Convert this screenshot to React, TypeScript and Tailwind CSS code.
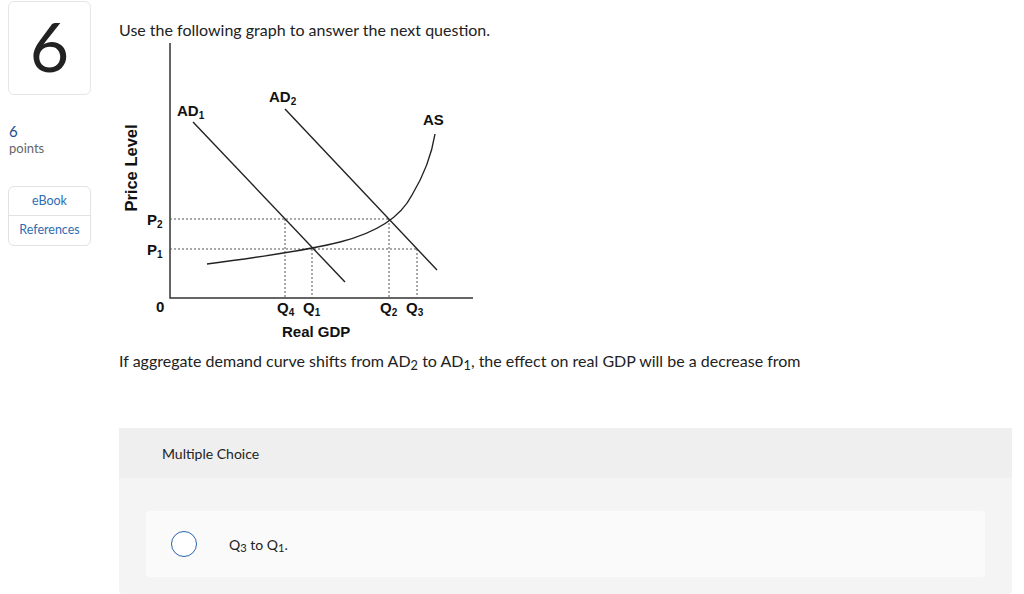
import React from "react";

const FONT = { fontFamily: "Lato, 'Open Sans', 'Liberation Sans', sans-serif" };
const GRAPH_FONT = "'Liberation Sans', Arial, sans-serif";

function Sub({ children }: { children: React.ReactNode }) {
  return <sub className="text-[0.8em] relative top-[0.2em] align-baseline">{children}</sub>;
}

// points are page coords minus (119, 40)
const ox = 119;
const oy = 40;
const p = (x: number, y: number) => `${x - ox},${y - oy}`;

function Graph() {
  const dash = { stroke: "#555", strokeWidth: 1, strokeDasharray: "2 2" };
  const label = { fontFamily: GRAPH_FONT, fontWeight: 700, fontSize: 15, fill: "#111" };
  return (
    <svg width={380} height={305} viewBox="0 0 380 305" className="block">
      {/* axes */}
      <polyline points={`${p(170, 43)} ${p(170, 298)} ${p(473, 298)}`} fill="none" stroke="#333" strokeWidth={1.5} />
      {/* guide lines */}
      <line x1={170 - ox} y1={219 - oy} x2={389 - ox} y2={219 - oy} {...dash} />
      <line x1={170 - ox} y1={249 - oy} x2={417 - ox} y2={249 - oy} {...dash} />
      <line x1={285 - ox} y1={219 - oy} x2={285 - ox} y2={298 - oy} {...dash} />
      <line x1={312 - ox} y1={249 - oy} x2={312 - ox} y2={298 - oy} {...dash} />
      <line x1={389 - ox} y1={219 - oy} x2={389 - ox} y2={298 - oy} {...dash} />
      <line x1={417 - ox} y1={249 - oy} x2={417 - ox} y2={298 - oy} {...dash} />
      {/* AD curves */}
      <line x1={193 - ox} y1={122 - oy} x2={345 - ox} y2={282 - oy} stroke="#222" strokeWidth={1.4} />
      <line x1={285 - ox} y1={109 - oy} x2={437 - ox} y2={270 - oy} stroke="#222" strokeWidth={1.4} />
      {/* AS curve */}
      <path
        d={`M ${p(207, 264)} Q ${p(300, 252)} ${p(340, 242)} Q ${p(395, 228)} ${p(412, 195)} Q ${p(430, 165)} ${p(435, 134)}`}
        fill="none"
        stroke="#222"
        strokeWidth={1.4}
      />
      {/* labels */}
      <text x={177 - ox} y={116 - oy} {...label}>
        AD<tspan fontSize={10} dy={3}>1</tspan>
      </text>
      <text x={269 - ox} y={102 - oy} {...label}>
        AD<tspan fontSize={10} dy={3}>2</tspan>
      </text>
      <text x={423 - ox} y={125 - oy} {...label}>AS</text>
      <text
        {...label}
        fontSize={16.5}
        textAnchor="middle"
        transform={`translate(${137 - ox},${168 - oy}) rotate(-90)`}
      >
        Price Level
      </text>
      <text x={147 - ox} y={225 - oy} {...label}>
        P<tspan fontSize={10} dy={3}>2</tspan>
      </text>
      <text x={147 - ox} y={255 - oy} {...label}>
        P<tspan fontSize={10} dy={3}>1</tspan>
      </text>
      <text x={156 - ox} y={312 - oy} {...label}>0</text>
      <text x={277 - ox} y={313 - oy} {...label}>
        Q<tspan fontSize={10} dy={3}>4</tspan>
      </text>
      <text x={303 - ox} y={313 - oy} {...label}>
        Q<tspan fontSize={10} dy={3}>1</tspan>
      </text>
      <text x={380 - ox} y={313 - oy} {...label}>
        Q<tspan fontSize={10} dy={3}>2</tspan>
      </text>
      <text x={406 - ox} y={313 - oy} {...label}>
        Q<tspan fontSize={10} dy={3}>3</tspan>
      </text>
      <text x={282 - ox} y={337 - oy} {...label}>Real GDP</text>
    </svg>
  );
}

export default function App() {
  return (
    <div className="w-[1024px] h-[594px] overflow-hidden bg-white flex text-[#222]" style={FONT}>
      {/* left rail */}
      <div className="w-[91px] pl-2 pt-px shrink-0 flex flex-col">
        <div className="h-[94px] w-[83px] rounded-md border border-[#e6e6e6] flex items-center justify-center">
          <span className="text-[68px] font-normal leading-none text-[#222] -mt-1">6</span>
        </div>
        <div className="mt-[27px] pl-px">
          <div className="text-[15px] leading-[18px] text-[#1b4f8a]">6</div>
          <div className="text-[13px] leading-[16px] text-[#666]">points</div>
        </div>
        <div className="mt-[30px] w-[83px] rounded-md border border-[#e2e2e2] flex flex-col text-[12.5px] text-[#2f6cb3]">
          <div className="h-[29px] flex items-center justify-center border-b border-[#e2e2e2]">eBook</div>
          <div className="h-[29px] flex items-center justify-center">References</div>
        </div>
      </div>

      {/* main */}
      <div className="ml-[28px] mr-3 flex-1 flex flex-col">
        <p className="mt-[20px] text-[16px] leading-[20px]">Use the following graph to answer the next question.</p>
        <Graph />
        <p className="mt-[6px] text-[16px] leading-[20px]">
          If aggregate demand curve shifts from AD<Sub>2</Sub> to AD<Sub>1</Sub>, the effect on real GDP will be a decrease from
        </p>

        <div className="mt-[57px] bg-[#f4f4f4] rounded-sm">
          <div className="h-[50px] bg-[#efefef] flex items-center pl-[43px] text-[14px]">Multiple Choice</div>
          <div className="pt-[33px] pb-[17px] px-[27px]">
            <div className="h-[66px] bg-[#fafafa] rounded-sm flex items-center pl-[25px]">
              <span className="w-[26px] h-[26px] rounded-full border-[1.5px] border-[#2a62a8] bg-white shrink-0" />
              <span className="ml-[32px] text-[14px]">
                Q<Sub>3</Sub> to Q<Sub>1</Sub>.
              </span>
            </div>
          </div>
        </div>
      </div>
    </div>
  );
}
